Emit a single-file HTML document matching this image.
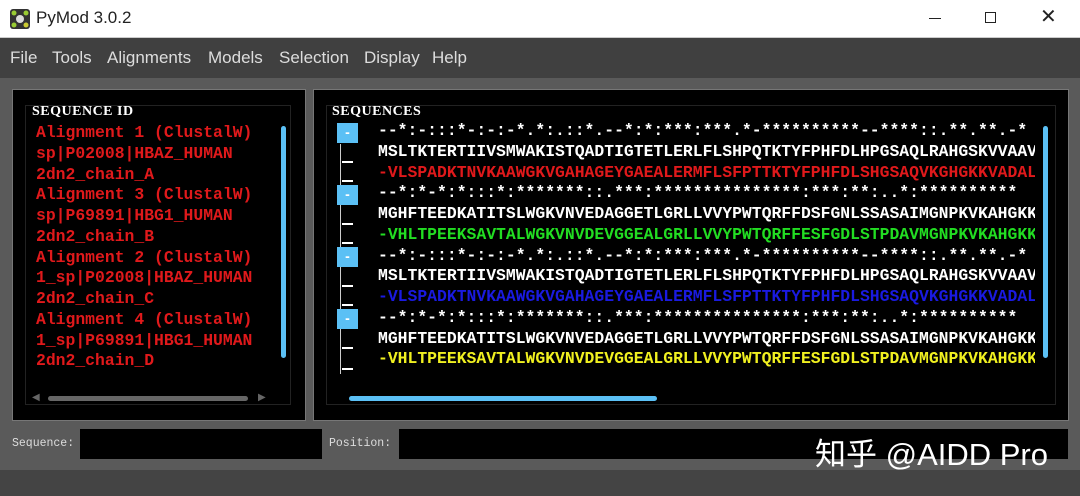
<!DOCTYPE html>
<html><head><meta charset="utf-8"><style>
*{margin:0;padding:0;box-sizing:border-box}
body{width:1080px;height:496px;overflow:hidden;background:#5a5a5a;font-family:"Liberation Sans",sans-serif;position:relative}
.title{position:absolute;left:0;top:0;width:1080px;height:38px;background:#fff;border-bottom:1px solid #ccc}
.title span{position:absolute;left:36px;top:8px;font-size:17px;color:#222}
.menu{position:absolute;top:38px;left:0;width:1080px;height:40px;background:#404040;color:#ddd;font-size:17px}
.menu span{position:absolute;top:10px}
.panel{position:absolute;background:#000;border:1px solid #777}
.inner{position:absolute;border:1px solid #222}
.mono{font-family:"Liberation Mono",monospace;font-weight:bold;font-size:16.4px;white-space:pre;position:absolute;line-height:20.75px}
.hdr{font-family:"Liberation Serif",serif;font-weight:bold;color:#fff;font-size:14px;position:absolute;letter-spacing:0.5px}
.btn{position:absolute;left:337px;width:21px;height:20px;background:#5bc0f5;color:#fff;font-size:14px;text-align:center;line-height:18px;font-weight:bold}
.us{position:absolute;left:342px;width:11px;height:2px;background:#fff}
.field{position:absolute;top:429px;height:30px;background:#000}
.lbl{position:absolute;top:437px;font-family:"Liberation Mono",monospace;font-size:11.5px;color:#ddd}
</style></head><body>
<div class="title">
<svg style="position:absolute;left:10px;top:9px" width="20" height="20"><rect width="20" height="20" rx="3" fill="#333"/><circle cx="10" cy="10" r="4" fill="#ddd"/><circle cx="4" cy="4" r="2.5" fill="#9c3"/><circle cx="16" cy="4" r="2.5" fill="#9c3"/><circle cx="4" cy="16" r="2.5" fill="#9c3"/><circle cx="16" cy="16" r="2.5" fill="#cc3"/></svg>
<span>PyMod 3.0.2</span>
<div style="position:absolute;left:929px;top:18px;width:12px;height:1px;background:#222"></div>
<div style="position:absolute;left:985px;top:12px;width:11px;height:11px;border:1px solid #222"></div>
<div style="position:absolute;left:1040px;top:4px;font-size:20px;color:#222">✕</div>
</div>
<div class="menu"><span style="left:10px">File</span><span style="left:52px">Tools</span><span style="left:107px">Alignments</span><span style="left:208px">Models</span><span style="left:279px">Selection</span><span style="left:364px">Display</span><span style="left:432px">Help</span></div>

<div class="panel" style="left:12px;top:89px;width:294px;height:332px"></div>
<div class="inner" style="left:25px;top:105px;width:266px;height:300px"></div>
<div class="hdr" style="left:32px;top:104px">SEQUENCE ID</div>
<div class="mono" style="left:36px;top:123px;color:#e0191b">Alignment 1 (ClustalW)
sp|P02008|HBAZ_HUMAN
2dn2_chain_A
Alignment 3 (ClustalW)
sp|P69891|HBG1_HUMAN
2dn2_chain_B
Alignment 2 (ClustalW)
1_sp|P02008|HBAZ_HUMAN
2dn2_chain_C
Alignment 4 (ClustalW)
1_sp|P69891|HBG1_HUMAN
2dn2_chain_D</div>
<div style="position:absolute;left:281px;top:126px;width:5px;height:232px;background:#5bc0f5;border-radius:3px"></div>
<div style="position:absolute;left:48px;top:396px;width:200px;height:5px;background:#666;border-radius:3px"></div>
<div style="position:absolute;left:32px;top:392px;color:#666;font-size:10px">◀</div>
<div style="position:absolute;left:258px;top:392px;color:#666;font-size:10px">▶</div>

<div class="panel" style="left:313px;top:89px;width:756px;height:332px"></div>
<div class="inner" style="left:326px;top:105px;width:730px;height:300px"></div>
<div class="hdr" style="left:332px;top:104px">SEQUENCES</div>
<div style="position:absolute;left:340px;top:144px;width:1px;height:230px;background:#ccc"></div>
<div class="btn" style="top:123px">-</div><div class="btn" style="top:185px">-</div><div class="btn" style="top:247px">-</div><div class="btn" style="top:309px">-</div>
<div class="us" style="top:161px"></div><div class="us" style="top:180px"></div><div class="us" style="top:223px"></div><div class="us" style="top:242px"></div><div class="us" style="top:285px"></div><div class="us" style="top:304px"></div><div class="us" style="top:347px"></div><div class="us" style="top:368px"></div>
<div style="position:absolute;left:378px;top:121px;width:657px;height:260px;overflow:hidden">
<div class="mono" style="left:0;top:0;color:#fff">--*:-:::*-:-:-*.*:.::*.--*:*:***:***.*-**********--****::.**.**.-*
MSLTKTERTIIVSMWAKISTQADTIGTETLERLFLSHPQTKTYFPHFDLHPGSAQLRAHGSKVVAAV
<span style="color:#e0191b">-VLSPADKTNVKAAWGKVGAHAGEYGAEALERMFLSFPTTKTYFPHFDLSHGSAQVKGHGKKVADAL</span>
--*:*-*:*:::*:*******::.***:***************:***:**:..*:**********
MGHFTEEDKATITSLWGKVNVEDAGGETLGRLLVVYPWTQRFFDSFGNLSSASAIMGNPKVKAHGKK
<span style="color:#22dd22">-VHLTPEEKSAVTALWGKVNVDEVGGEALGRLLVVYPWTQRFFESFGDLSTPDAVMGNPKVKAHGKK</span>
--*:-:::*-:-:-*.*:.::*.--*:*:***:***.*-**********--****::.**.**.-*
MSLTKTERTIIVSMWAKISTQADTIGTETLERLFLSHPQTKTYFPHFDLHPGSAQLRAHGSKVVAAV
<span style="color:#1a1ae0">-VLSPADKTNVKAAWGKVGAHAGEYGAEALERMFLSFPTTKTYFPHFDLSHGSAQVKGHGKKVADAL</span>
--*:*-*:*:::*:*******::.***:***************:***:**:..*:**********
MGHFTEEDKATITSLWGKVNVEDAGGETLGRLLVVYPWTQRFFDSFGNLSSASAIMGNPKVKAHGKK
<span style="color:#f0f020">-VHLTPEEKSAVTALWGKVNVDEVGGEALGRLLVVYPWTQRFFESFGDLSTPDAVMGNPKVKAHGKK</span></div></div>
<div style="position:absolute;left:1043px;top:126px;width:5px;height:232px;background:#5bc0f5;border-radius:3px"></div>
<div style="position:absolute;left:349px;top:396px;width:308px;height:5px;background:#5bc0f5;border-radius:3px"></div>

<div class="lbl" style="left:12px">Sequence:</div>
<div class="field" style="left:80px;width:242px"></div>
<div class="lbl" style="left:329px">Position:</div>
<div class="field" style="left:399px;width:669px"></div>
<div style="position:absolute;left:0;top:470px;width:1080px;height:26px;background:#444"></div>
<div style="position:absolute;left:815px;top:429px;font-size:31px;color:#fff;font-family:'Liberation Sans','Noto Sans CJK SC',sans-serif">知乎 @AIDD Pro</div>
</body></html>
